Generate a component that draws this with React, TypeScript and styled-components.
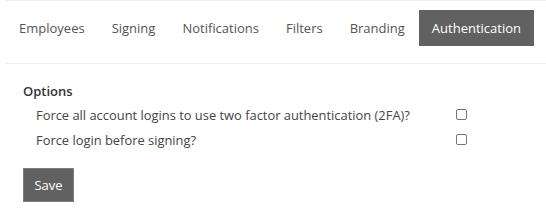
import React from 'react';
import styled, { createGlobalStyle } from 'styled-components';

const GlobalStyle = createGlobalStyle`
  body {
    margin: 0;
    background: #ffffff;
    font-family: "Open Sans", "Noto Sans", sans-serif;
    font-size: 13px;
    color: #333;
  }
`;

const tabs = ['Employees', 'Signing', 'Notifications', 'Filters', 'Branding', 'Authentication'];

const options = [
  'Force all account logins to use two factor authentication (2FA)?',
  'Force login before signing?',
];

const App = () => {
  return (
    <>
      <GlobalStyle />
      <Page>
        <TabBar>
          {tabs.map((t) => (
            <Tab key={t} active={t === 'Authentication'}>{t}</Tab>
          ))}
        </TabBar>
        <Content>
          <Heading>Options</Heading>
          <OptionList>
            {options.map((o) => (
              <OptionRow key={o}>
                <OptionLabel>{o}</OptionLabel>
                <Check type="checkbox" />
              </OptionRow>
            ))}
          </OptionList>
          <SaveButton>Save</SaveButton>
        </Content>
      </Page>
    </>
  );
};

export default App;

const Page = styled.div`
  width: 546px;
`;

const TabBar = styled.div`
  margin-left: 5px;
  padding: 9px 0 0 1px;
  box-sizing: border-box;
  border-top: 1px solid #eeeeee;
  border-bottom: 1px solid #eeeeee;
  height: 64px;
  display: flex;
  align-items: flex-start;
`;

const Tab = styled.div<{ active?: boolean }>`
  height: 36px;
  padding: 0 13px;
  margin-right: 1px;
  display: flex;
  align-items: center;
  font-size: 13px;
  color: ${(p) => (p.active ? '#ffffff' : '#555555')};
  background: ${(p) => (p.active ? '#616161' : 'transparent')};
`;

const Content = styled.div`
  padding: 18px 0 0 23px;
`;

const Heading = styled.div`
  font-weight: 600;
  font-size: 13px;
  line-height: 18px;
  color: #333;
`;

const OptionList = styled.div`
  padding-left: 13px;
  margin-top: 2px;
`;

const OptionRow = styled.div`
  display: grid;
  grid-template-columns: 420px auto;
  align-items: center;
  height: 25px;
`;

const OptionLabel = styled.span`
  color: #444;
  font-size: 12.9px;
`;

const Check = styled.input`
  appearance: none;
  margin: 0;
  width: 11px;
  height: 11px;
  border: 1px solid #767676;
  border-radius: 2px;
  background: #fff;
  box-sizing: border-box;
`;

const SaveButton = styled.button`
  margin-top: 16px;
  width: 51px;
  height: 34px;
  background: #616161;
  border: 1px solid #7e7e7e;
  color: #ffffff;
  font-family: "Open Sans", "Noto Sans", sans-serif;
  font-size: 13px;
  padding: 0;
`;
